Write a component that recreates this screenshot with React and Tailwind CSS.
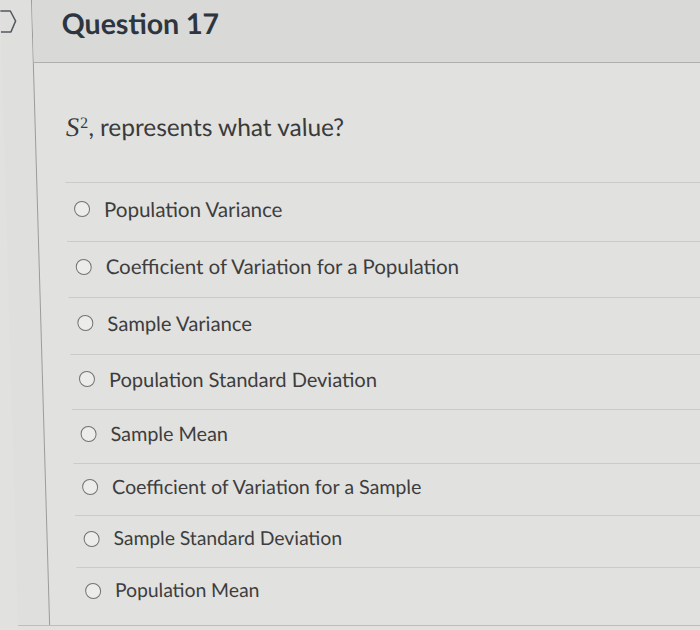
import React from 'react';

// row heights and text sizes follow the photo's perspective (things get a bit smaller further down)
const options = [
    { label: 'Population Variance', h: 'h-[59px]', size: 'text-[20.5px]' },
    { label: 'Coefficient of Variation for a Population', h: 'h-[56px]', size: 'text-[20.4px]' },
    { label: 'Sample Variance', h: 'h-[57px]', size: 'text-[20.2px]' },
    { label: 'Population Standard Deviation', h: 'h-[55px]', size: 'text-[20px]' },
    { label: 'Sample Mean', h: 'h-[54px]', size: 'text-[19.8px]' },
    { label: 'Coefficient of Variation for a Sample', h: 'h-[52px]', size: 'text-[19.6px]' },
    { label: 'Sample Standard Deviation', h: 'h-[52px]', size: 'text-[19.3px]' },
    { label: 'Population Mean', h: 'h-[52px]', size: 'text-[19.3px]' },
];

const App = () => {
    return (
        <div className="w-[700px] h-[630px] overflow-hidden bg-[#e1e1df] font-['Lato','Liberation_Sans',sans-serif]">
            {/* photo was taken at a slight angle */}
            <div className="flex h-[626px] origin-top-left skew-x-[1.66deg] border-b border-[#bdbdbb]">
                {/* left strip with the flag */}
                <div className="w-[32px] shrink-0 border-r border-[#9c9c9a] bg-[#dfdfdd] pt-[9px]">
                    <svg width="32" height="26" viewBox="0 0 32 26" fill="none">
                        <path d="M-6 2 H10 L15 12 L10 23 H-6" stroke="#55595e" strokeWidth="1.6" strokeLinejoin="round" />
                    </svg>
                </div>

                {/* main column */}
                <div className="flex-1 flex flex-col">
                    <header className="h-[63px] shrink-0 bg-[#d9d9d7] border-b border-[#aeaeac] pl-[29px] pt-[3px]">
                        <h1 className="text-[28.5px] font-bold text-[#2d3540] leading-[40px]">Question 17</h1>
                    </header>

                    <div className="pl-[30px] pt-[48px] text-[#3a3a3a]">
                        <p className="text-[24.4px] leading-[32px]">
                            <span className="font-['Liberation_Serif',serif] italic text-[27px]">S</span>
                            <sup className="font-['Liberation_Serif',serif] text-[16px] ml-[1px]">2</sup>
                            <span>, represents what value?</span>
                        </p>
                    </div>

                    <div className="ml-[28px] mt-[39px]">
                        {options.map((opt) => (
                            <div key={opt.label} className={`${opt.h} border-t border-[#cbcbc9] flex items-center pl-[8px] pb-[6px]`}>
                                <span className="w-[16px] h-[16px] shrink-0 rounded-full border-[1.5px] border-[#727272] bg-[#ececea]"></span>
                                <span className={`ml-[14px] ${opt.size} text-[#3d3d3d]`}>{opt.label}</span>
                            </div>
                        ))}
                    </div>
                </div>
            </div>
        </div>
    );
};

export default App;
